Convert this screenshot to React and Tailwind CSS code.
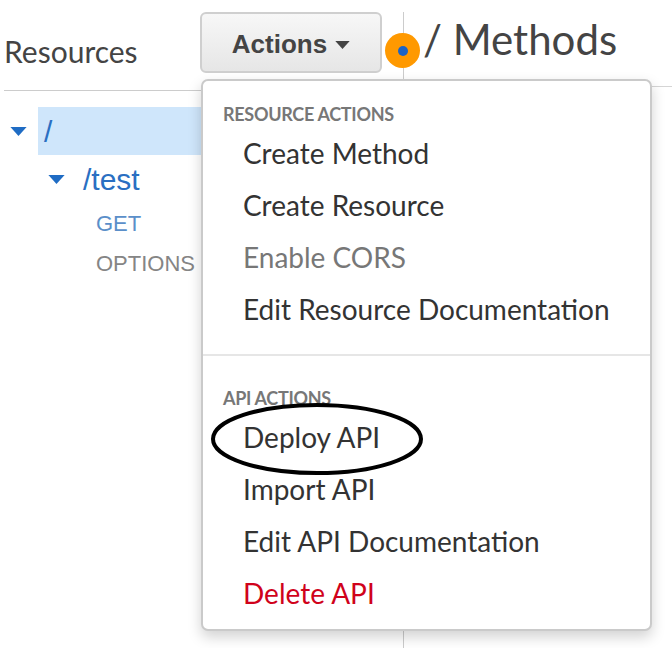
import React from 'react';

const lato = { fontFamily: 'Lato, "Noto Sans", sans-serif' };

const resourceActions = [
  { label: 'Create Method', tone: 'text-[#333333]' },
  { label: 'Create Resource', tone: 'text-[#333333]' },
  { label: 'Enable CORS', tone: 'text-[#777777]' },
  { label: 'Edit Resource Documentation', tone: 'text-[#333333]' }
];

const apiActions = [
  { label: 'Deploy API', tone: 'text-[#333333]' },
  { label: 'Import API', tone: 'text-[#333333]' },
  { label: 'Edit API Documentation', tone: 'text-[#333333]' },
  { label: 'Delete API', tone: 'text-[#d0021b]' }
];

function Caret({ className }) {
  return <svg viewBox="0 0 18 10" className={className}>
      <path d="M0 0 L18 0 L9 10 Z" fill="currentColor" />
    </svg>;
}

function MenuSection({ title, items }) {
  return <div>
      <div className="h-[26px] flex items-center pl-[20px] text-[18px] font-bold text-[#777777] uppercase tracking-[-0.3px]">
        {title}
      </div>
      {items.map(item => <div key={item.label} className={`h-[52px] flex items-center pl-[40px] text-[28px] ${item.tone}`}>
          {item.label}
        </div>)}
    </div>;
}

export default function App() {
  return <div className="relative w-[672px] h-[648px] bg-white overflow-hidden flex" style={{ fontFamily: '"Liberation Sans", Arial, sans-serif' }}>
      {/* left: resource tree */}
      <div className="w-[403px] shrink-0 flex flex-col">
        <div className="h-[91px] ml-1 flex border-b border-[#cccccc]">
          <div className="w-[196px] flex items-center pt-[12px] text-[30px] text-[#444444]" style={lato}>Resources</div>
          <div className="pt-[12px]">
            <button className="w-[182px] h-[61px] rounded-[6px] border-2 border-[#cfcfcf] bg-gradient-to-b from-[#f7f7f7] to-[#e6e6e6] flex items-center justify-center gap-[8px] pt-[3px] text-[26px] font-bold text-[#444444]">
              Actions
              <Caret className="w-[15px] h-[8px] text-[#444444] mt-[2px]" />
            </button>
          </div>
        </div>

        <div className="pt-[16px]">
          <div className="flex items-center h-[48px]">
            <Caret className="w-[17px] h-[9px] ml-[10px] text-[#1f6cc4]" />
            <div className="ml-[11px] flex-1 h-full bg-[#cfe6fb] flex items-center pl-[6px] text-[30px] text-[#2a6fc2]">/</div>
          </div>
          <div className="flex items-center h-[48px]">
            <Caret className="w-[17px] h-[9px] ml-[48px] text-[#1f6cc4]" />
            <span className="ml-[18px] text-[30px] text-[#2a6fc2]">/test</span>
          </div>
          <div className="h-[40px] flex items-center pl-[96px] text-[22px] text-[#5b8fc9]">GET</div>
          <div className="h-[40px] flex items-center pl-[96px] text-[22px] text-[#858585]">OPTIONS</div>
        </div>
      </div>

      {/* right: methods panel */}
      <div className="flex-1 mt-[12px] border-l border-[#cccccc] flex flex-col">
        <div className="h-[75px] border-b border-[#d5d5d5] flex items-center pl-[19px] pb-[19px] text-[42px] text-[#444444]" style={lato}>
          / Methods
        </div>
      </div>

      {/* status badge */}
      <div className="absolute left-[385px] top-[33px] w-[35px] h-[35px] rounded-full bg-[#ff9900] flex items-center justify-center">
        <div className="w-[10px] h-[10px] rounded-full bg-[#1b63c6]" />
      </div>

      {/* actions dropdown */}
      <div className="absolute left-[201px] top-[79px] w-[451px] h-[552px] bg-white border-2 border-[#cacaca] rounded-[7px] shadow-[0_6px_14px_rgba(0,0,0,0.18)] pt-[20px]" style={lato}>
        <MenuSection title="Resource Actions" items={resourceActions} />
        <div className="mt-[19px] h-[2px] bg-[#e6e6e6]" />
        <div className="mt-[29px]">
          <MenuSection title="API Actions" items={apiActions} />
        </div>
      </div>

      {/* hand-drawn highlight */}
      <svg className="absolute left-[206px] top-[398px] w-[222px] h-[82px]" viewBox="0 0 222 82">
        <ellipse cx="111" cy="41" rx="104" ry="34" fill="none" stroke="#000000" strokeWidth="4" />
      </svg>
    </div>;
}
